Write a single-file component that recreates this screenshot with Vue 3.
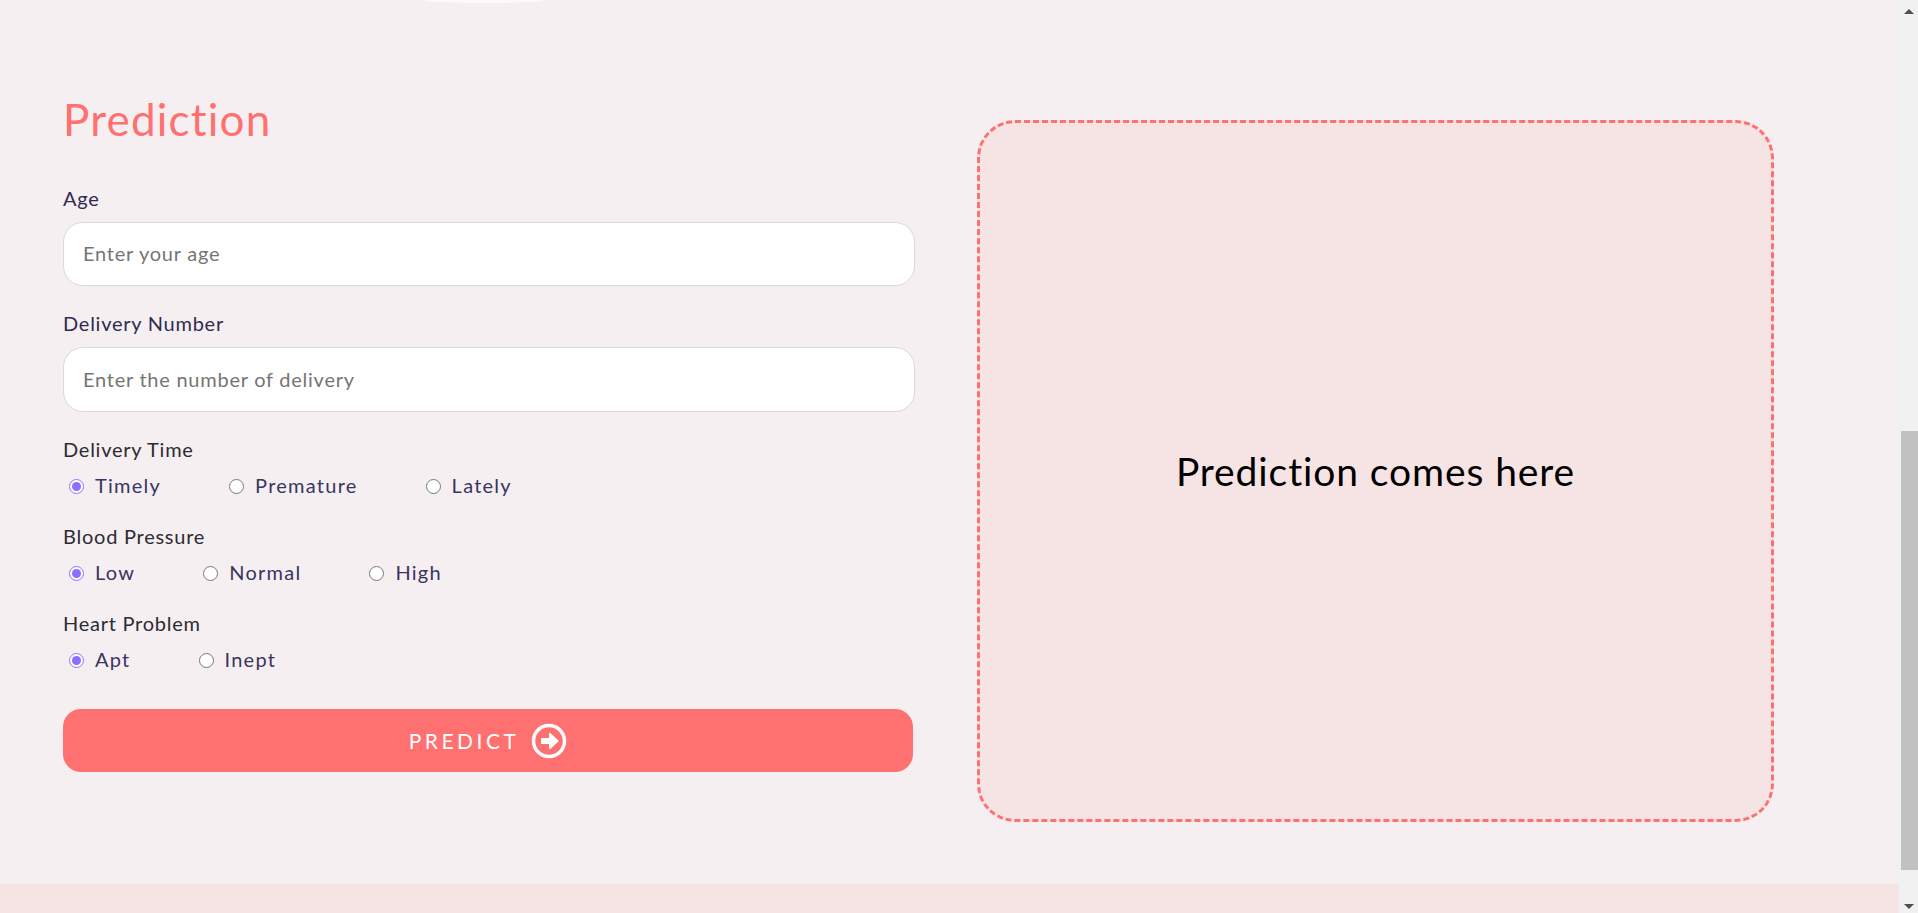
<template>
  <div class="page">
    <div class="content">
      <div class="top-arc"></div>
      <main class="prediction">
        <form class="form" @submit.prevent>
          <h1 class="title">Prediction</h1>

          <label class="label label-first">Age</label>
          <input class="input" type="text" placeholder="Enter your age" />

          <label class="label">Delivery Number</label>
          <input class="input input-tall" type="text" placeholder="Enter the number of delivery" />

          <div v-for="group in groups" :key="group.name" class="group">
            <div class="label label-dark">{{ group.label }}</div>
            <div class="options">
              <label v-for="(option, i) in group.options" :key="option" class="option">
                <input type="radio" :name="group.name" :checked="i === 0" />
                <span>{{ option }}</span>
              </label>
            </div>
          </div>

          <button class="predict" type="submit">
            <span>PREDICT</span>
            <svg width="36" height="36" viewBox="0 0 36 36">
              <circle cx="18" cy="18" r="15.500" fill="none" stroke="#fff" stroke-width="3.500" />
              <path d="M11 16h8v-5l7.500 7-7.500 7v-5h-8z" fill="#fff" stroke="#fff" stroke-width="2" stroke-linejoin="round" />
            </svg>
          </button>
        </form>

        <div class="result">Prediction comes here</div>
      </main>
      <footer class="footer"></footer>
    </div>

    <div class="scrollbar">
      <div class="arrow arrow-up"></div>
      <div class="thumb"></div>
      <div class="arrow arrow-down"></div>
    </div>
  </div>
</template>

<script setup>
const groups = [
  { name: 'time', label: 'Delivery Time', options: ['Timely', 'Premature', 'Lately'] },
  { name: 'pressure', label: 'Blood Pressure', options: ['Low', 'Normal', 'High'] },
  { name: 'heart', label: 'Heart Problem', options: ['Apt', 'Inept'] }
];
</script>

<style scoped>
.page {
  display: flex;
  width: 1918px;
  height: 913px;
  overflow: hidden;
  background: #f5eff1;
  font-family: "Lato", "Noto Sans", sans-serif;
}

.content {
  position: relative;
  flex: 1;
  display: flex;
  flex-direction: column;
}

.top-arc {
  position: absolute;
  top: -3px;
  left: 424px;
  width: 120px;
  height: 6px;
  border-radius: 50%;
  background: #fbfafa;
}

.prediction {
  height: 884px;
  box-sizing: border-box;
  padding: 94px 0 0 63px;
  display: flex;
  gap: 62px;
}

.form {
  width: 852px;
}

.title {
  margin: 0;
  font-size: 44px;
  line-height: 50px;
  font-weight: 400;
  letter-spacing: 1.2px;
  color: #ff7070;
}

.label {
  display: block;
  margin: 25px 0 12px;
  font-size: 20px;
  line-height: 24px;
  letter-spacing: 0.75px;
  color: #2f2b50;
}

.label-first {
  margin-top: 42px;
}

.label-dark {
  color: #2d2b33;
  margin-top: 26px;
  margin-bottom: 13px;
}

.input {
  display: block;
  box-sizing: border-box;
  width: 852px;
  height: 64px;
  padding: 0 19px 2px;
  border: 1px solid #dcd8da;
  border-radius: 20px;
  background: #fff;
  font: inherit;
  font-size: 20px;
  letter-spacing: 0.75px;
  outline: none;
}

.input-tall {
  height: 65px;
  margin-bottom: -1px;
}

.input::placeholder {
  color: #757575;
  opacity: 1;
}

.options {
  display: flex;
  gap: 68px;
  margin-left: 6px;
  height: 24px;
}

.option {
  display: flex;
  align-items: center;
  gap: 11px;
  font-size: 20px;
  line-height: 24px;
  letter-spacing: 1.25px;
  color: #3a3560;
}

.option span {
  margin-top: -2px;
}

.option input {
  width: 15px;
  height: 15px;
  margin: 0;
  accent-color: #8a70ff;
}

.predict {
  display: flex;
  align-items: center;
  justify-content: center;
  gap: 12px;
  width: 850px;
  height: 63px;
  margin-top: 37px;
  border: none;
  border-radius: 18px;
  background: #ff7070;
  color: #fff;
  font: inherit;
  font-size: 21px;
  letter-spacing: 3.5px;
}

.result {
  box-sizing: border-box;
  display: flex;
  align-items: center;
  justify-content: center;
  width: 797px;
  height: 702px;
  margin-top: 26px;
  border: 3px dashed #ff7070;
  border-radius: 38px;
  background: #f6e4e4;
  color: #000;
  font-size: 39px;
  letter-spacing: 0.9px;
}

.footer {
  flex: 1;
  background: #f6e4e4;
}

.scrollbar {
  width: 19px;
  flex: none;
  background: #f1f1f1;
  position: relative;
}

.thumb {
  position: absolute;
  top: 431px;
  left: 2px;
  right: 0;
  height: 439px;
  background: #c1c1c1;
}

.arrow {
  position: absolute;
  left: 5px;
  width: 0;
  height: 0;
  border-left: 5px solid transparent;
  border-right: 5px solid transparent;
}

.arrow-up {
  top: 9px;
  border-bottom: 5px solid #505050;
}

.arrow-down {
  bottom: 4px;
  border-top: 5px solid #505050;
}
</style>

<style>
html,
body {
  margin: 0;
  overflow: hidden;
}
</style>
